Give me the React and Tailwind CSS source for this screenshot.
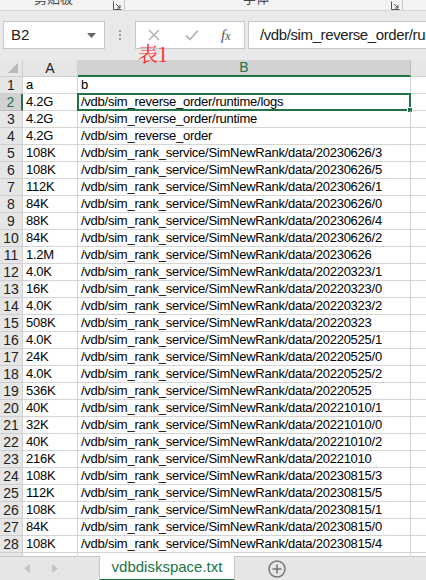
import React from "react";

const P = "/vdb/sim_rank_service/SimNewRank/data/";

const rows = [
  ["a", "b"],
  ["4.2G", "/vdb/sim_reverse_order/runtime/logs"],
  ["4.2G", "/vdb/sim_reverse_order/runtime"],
  ["4.2G", "/vdb/sim_reverse_order"],
  ["108K", P + "20230626/3"],
  ["108K", P + "20230626/5"],
  ["112K", P + "20230626/1"],
  ["84K", P + "20230626/0"],
  ["88K", P + "20230626/4"],
  ["84K", P + "20230626/2"],
  ["1.2M", P + "20230626"],
  ["4.0K", P + "20220323/1"],
  ["16K", P + "20220323/0"],
  ["4.0K", P + "20220323/2"],
  ["508K", P + "20220323"],
  ["4.0K", P + "20220525/1"],
  ["24K", P + "20220525/0"],
  ["4.0K", P + "20220525/2"],
  ["536K", P + "20220525"],
  ["40K", P + "20221010/1"],
  ["32K", P + "20221010/0"],
  ["40K", P + "20221010/2"],
  ["216K", P + "20221010"],
  ["108K", P + "20230815/3"],
  ["112K", P + "20230815/5"],
  ["108K", P + "20230815/1"],
  ["84K", P + "20230815/0"],
  ["108K", P + "20230815/4"],
];

const Launcher = () => (
  <svg width="9" height="9" viewBox="0 0 9 9" className="text-gray-600">
    <path d="M0.5 0.5v8h8" fill="none" stroke="currentColor" strokeWidth="1" />
    <path d="M3 3l4 4M4 7h3V4" fill="none" stroke="currentColor" strokeWidth="1" />
  </svg>
);

export default function App() {
  return (
    <div className="relative w-[426px] h-[580px] overflow-hidden bg-white flex flex-col" style={{ fontFamily: '"Liberation Sans", Arial, sans-serif' }}>
      {/* ribbon group labels (cut off) */}
      <div className="h-[11px] bg-[#f3f3f3] flex items-start overflow-hidden text-[13px] text-[#444] border-b border-[#d6d6d6] shrink-0" style={{ fontFamily: '"Noto Sans CJK SC", sans-serif' }}>
        <div className="w-[124px] flex items-start">
          <span className="ml-[34px] -mt-[12px] leading-[20px]">剪贴板</span>
          <span className="ml-auto mr-[2px] mt-[1px]"><Launcher /></span>
        </div>
        <div className="w-px h-[11px] bg-[#c8c8c8]" />
        <div className="w-[277px] flex items-start">
          <span className="ml-[118px] -mt-[12px] leading-[20px]">字体</span>
          <span className="ml-auto mr-[2px] mt-[1px]"><Launcher /></span>
        </div>
        <div className="w-px h-[11px] bg-[#c8c8c8]" />
      </div>

      {/* formula bar */}
      <div className="h-[49px] bg-[#e9e9e9] flex items-start pt-[10px] shrink-0">
        <div className="ml-[3px] w-[102px] h-[28px] bg-white border border-[#c6c6c6] flex items-center px-[7px] text-[15px] text-[#222]">
          <span>B2</span>
          <svg className="ml-auto mr-[1px]" width="9" height="5" viewBox="0 0 9 5"><path d="M0 0h9L4.5 5z" fill="#666" /></svg>
        </div>
        <div className="w-[30px] h-[28px] flex flex-col items-center justify-center gap-[2px]">
          <span className="w-[2px] h-[2px] bg-[#9a9a9a]" />
          <span className="w-[2px] h-[2px] bg-[#9a9a9a]" />
          <span className="w-[2px] h-[2px] bg-[#9a9a9a]" />
        </div>
        <div className="w-[110px] h-[28px] bg-white border border-[#c6c6c6] flex items-center">
          <svg className="ml-[12px]" width="12" height="12" viewBox="0 0 12 12"><path d="M1 1l10 10M11 1L1 11" stroke="#b4b4b4" strokeWidth="1.6" /></svg>
          <svg className="ml-[25px]" width="14" height="12" viewBox="0 0 14 12"><path d="M1 6.5l4 4L13 1.5" fill="none" stroke="#b4b4b4" strokeWidth="1.8" /></svg>
          <span className="ml-[22px] text-[15px] italic text-[#555]" style={{ fontFamily: '"Liberation Serif", serif' }}>f<span className="text-[12px]">x</span></span>
        </div>
        <div className="ml-[3px] flex-1 h-[28px] bg-white border border-[#c6c6c6] border-r-0 flex items-center pl-[11px] text-[15px] tracking-[-0.4px] text-[#222] overflow-hidden whitespace-nowrap">
          /vdb/sim_reverse_order/runtime/logs
        </div>
      </div>

      {/* column headers */}
      <div className="h-[17px] flex shrink-0 text-[14px] bg-[#e6e6e6]">
        <div className="w-[23px] h-[17px] border-r border-b border-[#cfcfcf] bg-[#e6e6e6] relative">
          <svg className="absolute right-[4px] bottom-[3px]" width="10" height="10" viewBox="0 0 10 10"><path d="M10 0V10H0z" fill="#b8b8b8" /></svg>
        </div>
        <div className="w-[55px] h-[17px] border-r border-b border-[#cfcfcf] bg-[#e6e6e6] flex items-center justify-center text-[#222]">A</div>
        <div className="w-[333px] h-[17px] border-r border-[#bdbdbd] border-b-2 border-b-[#217346] bg-[#d2d2d2] flex items-center justify-center text-[#217346]">B</div>
        <div className="flex-1 h-[17px] border-b border-[#cfcfcf] bg-[#e6e6e6]" />
      </div>

      {/* grid */}
      <div className="flex flex-col text-[13px] tracking-[-0.25px] text-black shrink-0">
        {rows.map((r, i) => {
          const sel = i === 1;
          return (
            <div key={i} className="h-[17px] flex">
              <div className={sel ? "w-[23px] h-[17px] bg-[#d2d2d2] border-r-2 border-r-[#217346] border-b border-b-[#bdbdbd] flex items-end justify-center text-[14px] tracking-normal text-[#217346] leading-[16px]" : "w-[23px] h-[17px] bg-[#e6e6e6] border-r border-b border-[#cfcfcf] flex items-end justify-center text-[14px] tracking-normal text-[#222] leading-[16px]"}>
                {i + 1}
              </div>
              <div className="w-[55px] h-[17px] border-r border-b border-[#d4d4d4] flex items-end pl-[3px] leading-[16px] whitespace-nowrap overflow-hidden">
                {r[0]}
              </div>
              <div className="w-[333px] h-[17px] border-r border-b border-[#d4d4d4] flex items-end pl-[3px] leading-[16px] whitespace-nowrap relative">
                {r[1]}
                {sel && (
                  <>
                    <div className="absolute -left-[1px] -top-[1px] -right-[1px] -bottom-[1px] border-2 border-[#217346]" />
                    <div className="absolute -right-[3px] -bottom-[3px] w-[6px] h-[6px] bg-[#217346] border border-white" />
                  </>
                )}
              </div>
              <div className="flex-1 h-[17px] border-b border-[#d4d4d4]" />
            </div>
          );
        })}
        <div className="h-[3px] flex">
          <div className="w-[23px] bg-[#e6e6e6] border-r border-[#cfcfcf]" />
          <div className="w-[55px] border-r border-[#d4d4d4]" />
          <div className="w-[333px] border-r border-[#d4d4d4]" />
        </div>
      </div>

      {/* sheet tabs */}
      <div className="flex-1 bg-[#e6e6e6] border-t border-[#c6c6c6] flex items-stretch">
        <div className="w-[99px] flex items-center">
          <svg className="ml-[24px]" width="6" height="9" viewBox="0 0 6 9"><path d="M6 0v9L0 4.5z" fill="#c4c4c4" /></svg>
          <svg className="ml-[22px]" width="6" height="9" viewBox="0 0 6 9"><path d="M0 0v9l6-4.5z" fill="#c4c4c4" /></svg>
        </div>
        <div className="-mt-px w-[136px] bg-white border-x border-[#c6c6c6] border-b-2 border-b-[#217346] flex items-center justify-center text-[15px] text-[#217346]">
          vdbdiskspace.txt
        </div>
        <div className="ml-[33px] flex items-center">
          <svg width="18" height="18" viewBox="0 0 18 18">
            <circle cx="9" cy="9" r="8" fill="none" stroke="#777" strokeWidth="1.5" />
            <path d="M9 4.5v9M4.5 9h9" stroke="#777" strokeWidth="1.6" />
          </svg>
        </div>
      </div>

      {/* annotation */}
      <div className="absolute left-[138px] top-[44px] text-[20px] text-[#ff2a2a] leading-none" style={{ fontFamily: '"Noto Serif CJK SC", "Liberation Serif", serif' }}>
        表1
      </div>
    </div>
  );
}
